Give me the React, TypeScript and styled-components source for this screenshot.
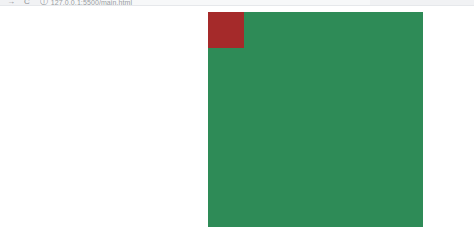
import React from "react";
import styled, { createGlobalStyle } from "styled-components";

const Global = createGlobalStyle`
  html, body { margin: 0; padding: 0; background: #ffffff; }
  body { font-family: "Liberation Sans", Arial, sans-serif; }
`;

const Toolbar = styled.div`
  height: 5px;
  background: #f1f2f4;
  border-bottom: 1px solid #e6e8eb;
  display: flex;
  align-items: flex-end;
  overflow: hidden;
  padding-left: 7px;
`;

const Glyph = styled.span<{ $gap: number }>`
  color: #8e9196;
  font-size: 8px;
  line-height: 8px;
  margin-bottom: -1px;
  margin-right: ${(p) => p.$gap}px;
`;

const Address = styled.div`
  flex: 0 0 330px;
  height: 5px;
  background: #f7f8f9;
  display: flex;
  align-items: flex-end;
  overflow: hidden;
`;

const Url = styled.span`
  color: #9a9da2;
  font-size: 7px;
  line-height: 7px;
  margin-bottom: -1px;
  letter-spacing: 0.1px;
`;

const Stage = styled.main`
  padding: 6px 0 0 208px;
`;

const Square = styled.div<{ $size: number; $color: string }>`
  width: ${(p) => p.$size}px;
  height: ${(p) => p.$size}px;
  background: ${(p) => p.$color};
`;

export default function App() {
  return (
    <>
      <Global />
      <Toolbar>
        <Glyph $gap={9}>→</Glyph>
        <Glyph $gap={10}>C</Glyph>
        <Address>
          <Glyph $gap={3}>ⓘ</Glyph>
          <Url>127.0.0.1:5500/main.html</Url>
        </Address>
      </Toolbar>
      <Stage>
        <Square $size={215} $color="#2e8b57">
          <Square $size={36} $color="#a52a2a" />
        </Square>
      </Stage>
    </>
  );
}
